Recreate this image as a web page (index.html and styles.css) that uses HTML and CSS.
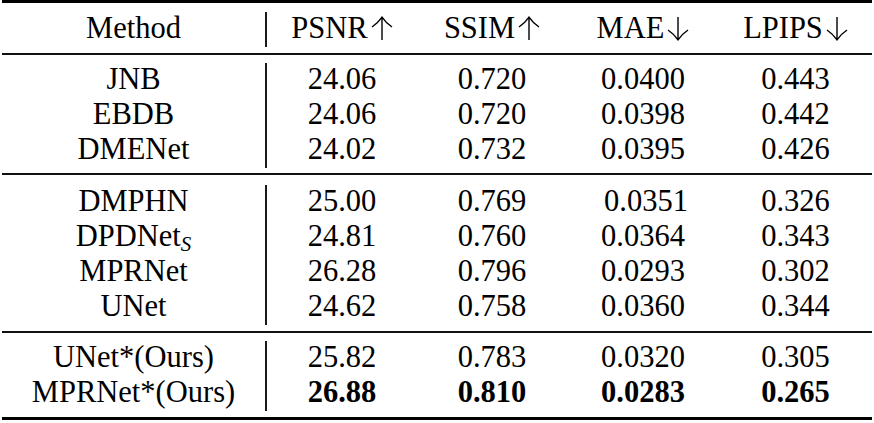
FILE: index.html
```html
<!DOCTYPE html>
<html lang="en">
<head>
  <meta charset="UTF-8" />
  <meta name="viewport" content="width=device-width, initial-scale=1.0"/>
  <title>Results</title>
  <link rel="stylesheet" href="styles.css">
</head>
<body>
  <div class="table">
    <div class="group head">
      <div class="row">
        <div class="cell name">Method</div>
        <div class="cell">PSNR<svg class="arrow" viewBox="0 0 22 25"><path d="M11 24V1.5M1 11Q7.5 6.5 11 1.2Q14.5 6.5 21 11"/></svg></div>
        <div class="cell">SSIM<svg class="arrow" viewBox="0 0 22 25"><path d="M11 24V1.5M1 11Q7.5 6.5 11 1.2Q14.5 6.5 21 11"/></svg></div>
        <div class="cell">MAE<svg class="arrow" viewBox="0 0 22 25"><path d="M11 1V23.5M1 14Q7.5 18.5 11 23.8Q14.5 18.5 21 14"/></svg></div>
        <div class="cell">LPIPS<svg class="arrow" viewBox="0 0 22 25"><path d="M11 1V23.5M1 14Q7.5 18.5 11 23.8Q14.5 18.5 21 14"/></svg></div>
      </div>
    </div>

    <div class="group g1">
      <div class="row">
        <div class="cell name">JNB</div>
        <div class="cell">24.06</div>
        <div class="cell">0.720</div>
        <div class="cell">0.0400</div>
        <div class="cell">0.443</div>
      </div>
      <div class="row">
        <div class="cell name">EBDB</div>
        <div class="cell">24.06</div>
        <div class="cell">0.720</div>
        <div class="cell">0.0398</div>
        <div class="cell">0.442</div>
      </div>
      <div class="row">
        <div class="cell name">DMENet</div>
        <div class="cell">24.02</div>
        <div class="cell">0.732</div>
        <div class="cell">0.0395</div>
        <div class="cell">0.426</div>
      </div>
    </div>

    <div class="group g2">
      <div class="row">
        <div class="cell name">DMPHN</div>
        <div class="cell">25.00</div>
        <div class="cell">0.769</div>
        <div class="cell shift">0.0351</div>
        <div class="cell">0.326</div>
      </div>
      <div class="row">
        <div class="cell name">DPDNet<sub class="sub">S</sub></div>
        <div class="cell">24.81</div>
        <div class="cell">0.760</div>
        <div class="cell">0.0364</div>
        <div class="cell">0.343</div>
      </div>
      <div class="row">
        <div class="cell name">MPRNet</div>
        <div class="cell">26.28</div>
        <div class="cell">0.796</div>
        <div class="cell">0.0293</div>
        <div class="cell">0.302</div>
      </div>
      <div class="row">
        <div class="cell name">UNet</div>
        <div class="cell">24.62</div>
        <div class="cell">0.758</div>
        <div class="cell">0.0360</div>
        <div class="cell">0.344</div>
      </div>
    </div>

    <div class="group last">
      <div class="row">
        <div class="cell name">UNet*(Ours)</div>
        <div class="cell">25.82</div>
        <div class="cell">0.783</div>
        <div class="cell">0.0320</div>
        <div class="cell">0.305</div>
      </div>
      <div class="row best">
        <div class="cell name">MPRNet*(Ours)</div>
        <div class="cell">26.88</div>
        <div class="cell">0.810</div>
        <div class="cell">0.0283</div>
        <div class="cell">0.265</div>
      </div>
    </div>
  </div>
</body>
</html>
```

FILE: styles.css
```css
* {
  margin: 0;
  padding: 0;
  box-sizing: border-box;
}
body {
  background: #fff;
  color: #000;
  font-family: "Liberation Serif", "Times New Roman", serif;
  font-size: 30.5px;
}
.table {
  margin: 0 2px;
  border-top: 3px solid #000;
}
.group {
  padding: 8px 0 6px;
  border-bottom: 2px solid #111;
}
.head {
  padding-top: 9px;
}
.g1 {
  padding-bottom: 5px;
}
.g2 {
  padding-top: 10px;
}
.group.last {
  border-bottom: 3px solid #000;
}
.row {
  display: grid;
  grid-template-columns: 265px 150px 150px 152px 153px;
  height: 35px;
  line-height: 33px;
}
.cell {
  text-align: center;
  white-space: nowrap;
}
.name {
  border-right: 2px solid #1a1a1a;
}
.arrow {
  width: 22px;
  height: 25px;
  margin-left: 3px;
  vertical-align: -3px;
  fill: none;
  stroke: #000;
  stroke-width: 1.4;
}
.sub {
  font-style: italic;
  font-size: 21px;
  line-height: 0;
  vertical-align: -5px;
}
.shift {
  padding-left: 6px;
}
.best .cell {
  font-weight: bold;
}
.best .name {
  font-weight: normal;
}
```
